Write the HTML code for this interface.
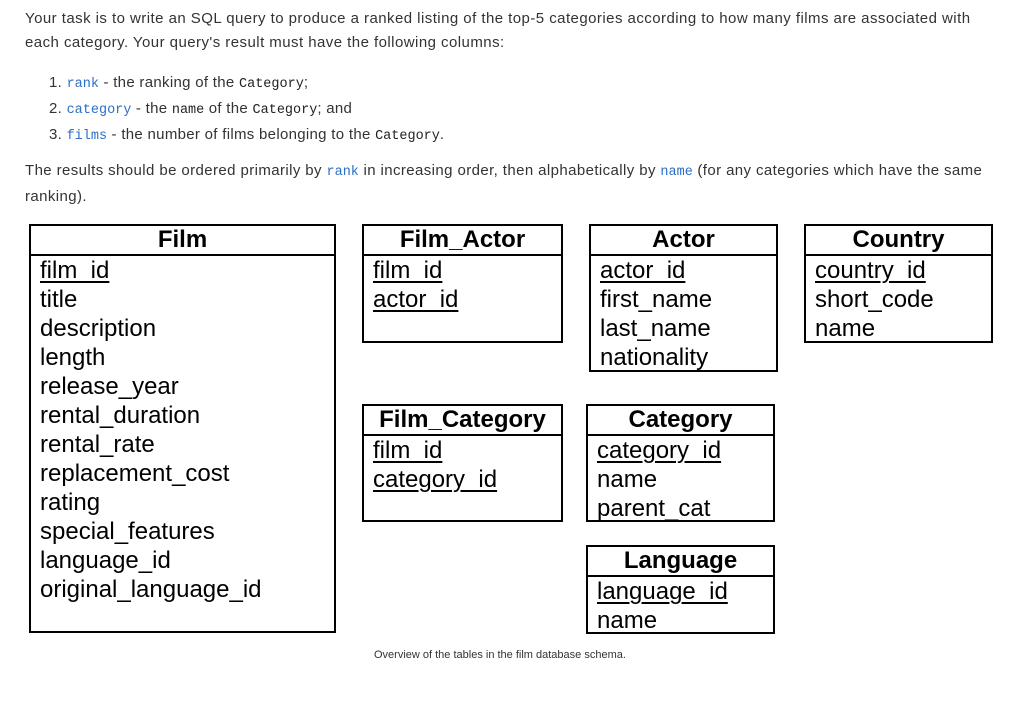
<!DOCTYPE html>
<html><head><meta charset="utf-8"><style>
body{margin:0;background:#fff;width:1017px;height:705px;position:relative;overflow:hidden;font-family:"Liberation Sans",Arial,sans-serif;}
.t{position:absolute;left:25px;font-size:15px;color:#333;line-height:24px;width:970px;letter-spacing:0.45px}
code{font-family:"Liberation Mono",monospace;font-size:13.5px;letter-spacing:0}
code.b{color:#2a6fc9}
code.k{color:#222}
.box{position:absolute;border:2px solid #000;box-sizing:border-box;font-family:"Liberation Sans",Arial,sans-serif;color:#000}
.h{height:28px;line-height:28px;border-bottom:2px solid #000;text-align:center;font-weight:bold;font-size:24px}
.r{font-size:24px;line-height:29px;padding-left:9px;white-space:nowrap}
.u span{text-decoration:underline;text-underline-offset:3px;text-decoration-thickness:2px}
.cap{position:absolute;top:649px;left:374px;font-size:11px;color:#333}
</style></head><body>
<div class="t" style="top:7px">Your task is to write an SQL query to produce a ranked listing of the top-5 categories according to how many films are associated with each category. Your query's result must have the following columns:</div>
<div class="t" style="top:71px;left:49px;letter-spacing:0.3px">1. <code class="b">rank</code> - the ranking of the <code class="k">Category</code>;<br>2. <code class="b">category</code> - the <code class="k">name</code> of the <code class="k">Category</code>; and<br>3. <code class="b">films</code> - the number of films belonging to the <code class="k">Category</code>.</div>
<div class="t" style="top:159px;letter-spacing:0.4px">The results should be ordered primarily by <code class="b">rank</code> in increasing order, then alphabetically by <code class="b">name</code> (for any categories which have the same ranking).</div>

<div class="box" style="left:29px;top:224px;width:307px;height:409px"><div class="h">Film</div>
<div class="r u"><span>film_id</span></div><div class="r">title</div><div class="r">description</div><div class="r">length</div><div class="r">release_year</div><div class="r">rental_duration</div><div class="r">rental_rate</div><div class="r">replacement_cost</div><div class="r">rating</div><div class="r">special_features</div><div class="r">language_id</div><div class="r">original_language_id</div></div>

<div class="box" style="left:362px;top:224px;width:201px;height:119px"><div class="h">Film_Actor</div>
<div class="r u"><span>film_id</span></div><div class="r u"><span>actor_id</span></div></div>

<div class="box" style="left:589px;top:224px;width:189px;height:148px"><div class="h">Actor</div>
<div class="r u"><span>actor_id</span></div><div class="r">first_name</div><div class="r">last_name</div><div class="r">nationality</div></div>

<div class="box" style="left:804px;top:224px;width:189px;height:119px"><div class="h">Country</div>
<div class="r u"><span>country_id</span></div><div class="r">short_code</div><div class="r">name</div></div>

<div class="box" style="left:362px;top:404px;width:201px;height:118px"><div class="h">Film_Category</div>
<div class="r u"><span>film_id</span></div><div class="r u"><span>category_id</span></div></div>

<div class="box" style="left:586px;top:404px;width:189px;height:118px"><div class="h">Category</div>
<div class="r u"><span>category_id</span></div><div class="r">name</div><div class="r">parent_cat</div></div>

<div class="box" style="left:586px;top:545px;width:189px;height:89px"><div class="h">Language</div>
<div class="r u"><span>language_id</span></div><div class="r">name</div></div>

<div class="cap">Overview of the tables in the film database schema.</div>
</body></html>
